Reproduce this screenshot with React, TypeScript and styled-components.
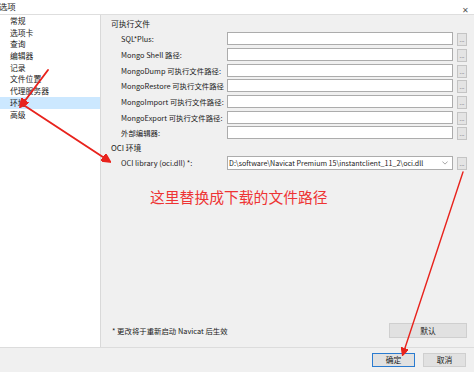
import { FC } from "react";
import styled, { createGlobalStyle } from "styled-components";

const GlobalStyle = createGlobalStyle`
  html, body {
    margin: 0;
    padding: 0;
    background: #f0f0f0;
  }
  * {
    box-sizing: border-box;
  }
`;

const navItems = ["常规", "选项卡", "查询", "编辑器", "记录", "文件位置", "代理服务器", "环境", "高级"];

const pathRows = [
  "SQL*Plus:",
  "Mongo Shell 路径:",
  "MongoDump 可执行文件路径:",
  "MongoRestore 可执行文件路径",
  "MongoImport 可执行文件路径:",
  "MongoExport 可执行文件路径:",
  "外部编辑器:",
];

const App: FC = () => {
  return (
    <>
      <GlobalStyle />
      <Window>
        <TitleBar>
          <Title>选项</Title>
          <Close>✕</Close>
        </TitleBar>

        <Body>
          <Sidebar>
            {navItems.map((item) => (
              <NavItem key={item} $active={item === "环境"}>
                {item}
              </NavItem>
            ))}
          </Sidebar>

          <Content>
            <SectionTitle>可执行文件</SectionTitle>
            <Rows>
              {pathRows.map((label) => (
                <Row key={label}>
                  <Label>{label}</Label>
                  <TextBox />
                  <Browse>...</Browse>
                </Row>
              ))}
            </Rows>

            <SectionTitle $gap>OCI 环境</SectionTitle>
            <Rows>
              <Row>
                <Label>OCI library (oci.dll) *:</Label>
                <Combo>
                  <ComboText>D:\software\Navicat Premium 15\instantclient_11_2\oci.dll</ComboText>
                  <Chevron viewBox="0 0 8 5">
                    <path d="M0.5 0.5 L4 4 L7.5 0.5" />
                  </Chevron>
                </Combo>
                <Browse>...</Browse>
              </Row>
            </Rows>

            <Annotation>这里替换成下载的文件路径</Annotation>

            <NoteRow>
              <Note>* 更改将于重新启动 Navicat 后生效</Note>
              <DefaultButton>默认</DefaultButton>
            </NoteRow>
          </Content>
        </Body>

        <Footer>
          <FooterButton $primary>确定</FooterButton>
          <FooterButton>取消</FooterButton>
        </Footer>

        <Arrows viewBox="0 0 474 372">
          <defs>
            <marker id="head" viewBox="0 0 10 10" refX="8" refY="5" markerWidth="5" markerHeight="4.5" orient="auto">
              <path d="M0 0 L10 5 L0 10 z" fill="#e8231d" />
            </marker>
            <marker id="headThin" viewBox="0 0 10 10" refX="8" refY="5" markerWidth="6" markerHeight="5" orient="auto">
              <path d="M0 0 L10 5 L0 10 z" fill="#e8231d" />
            </marker>
          </defs>
          <line x1="48" y1="70" x2="21" y2="106" markerEnd="url(#head)" />
          <line x1="22" y1="104" x2="109" y2="161" markerEnd="url(#head)" />
          <line x1="463" y1="172" x2="403" y2="354" markerEnd="url(#headThin)" strokeWidth="1.4" />
        </Arrows>
      </Window>
    </>
  );
};

export default App;

const Window = styled.div`
  position: relative;
  width: 474px;
  height: 372px;
  display: flex;
  flex-direction: column;
  background: #f0f0f0;
  font-family: "Noto Sans CJK SC", "Noto Sans", sans-serif;
  font-size: 7.8px;
  color: #1a1a1a;
  overflow: hidden;
`;

const TitleBar = styled.div`
  height: 15px;
  flex: none;
  background: #ffffff;
  display: flex;
  align-items: center;
  justify-content: space-between;
  padding: 0 5px 0 0;
  border-bottom: 1px solid #dedede;
`;

const Title = styled.div`
  font-size: 8.4px;
  margin-left: -1px;
  margin-top: -2px;
`;

const Close = styled.div`
  font-size: 8px;
  color: #555;
  margin-top: 5px;
`;

const Body = styled.div`
  flex: 1;
  display: flex;
  min-height: 0;
`;

const Sidebar = styled.div`
  width: 101px;
  flex: none;
  background: #ffffff;
  border-right: 1px solid #d9d9d9;
`;

const NavItem = styled.div<{ $active?: boolean }>`
  height: 11.7px;
  line-height: 11.7px;
  padding-left: 10px;
  background: ${({ $active }) => ($active ? "#cce8ff" : "transparent")};
`;

const Content = styled.div`
  flex: 1;
  display: flex;
  flex-direction: column;
  padding: 3px 7px 9px 10px;
`;

const SectionTitle = styled.div<{ $gap?: boolean }>`
  line-height: 12px;
  margin-top: ${({ $gap }) => ($gap ? "1.5px" : "0")};
  margin-bottom: 1px;
`;

const Rows = styled.div`
  display: flex;
  flex-direction: column;
  padding-left: 10px;
`;

const Row = styled.div`
  height: 15.65px;
  display: grid;
  grid-template-columns: 106px 226px 14px;
  align-items: center;
`;

const Label = styled.div`
  font-size: 7.4px;
  white-space: nowrap;
`;

const TextBox = styled.div`
  height: 13px;
  background: #ffffff;
  border: 1px solid #acacac;
`;

const Combo = styled.div`
  height: 14px;
  background: #ffffff;
  border: 1px solid #acacac;
  display: flex;
  align-items: center;
  justify-content: space-between;
  padding: 0 4px 0 1px;
`;

const ComboText = styled.span`
  font-size: 7.1px;
  white-space: nowrap;
`;

const Chevron = styled.svg`
  width: 6px;
  height: 4px;
  fill: none;
  stroke: #888;
  stroke-width: 1;
`;

const Browse = styled.div`
  justify-self: end;
  width: 10px;
  height: 13px;
  margin-top: 2px;
  background: #e4e4e4;
  border: 1px solid #c4c4c4;
  color: #666;
  font-size: 6px;
  line-height: 12px;
  text-align: center;
`;

const Annotation = styled.div`
  margin-top: 16px;
  margin-left: 39px;
  font-size: 14.8px;
  line-height: 20px;
  color: #ee3434;
`;

const NoteRow = styled.div`
  margin-top: auto;
  display: flex;
  align-items: center;
  justify-content: space-between;
  padding-left: 1px;
`;

const Note = styled.div`
  font-size: 7.4px;
`;

const DefaultButton = styled.div`
  width: 78px;
  height: 15px;
  background: #e1e1e1;
  border: 1px solid #cfcfcf;
  display: flex;
  align-items: center;
  justify-content: center;
`;

const Footer = styled.div`
  height: 25px;
  flex: none;
  border-top: 1px solid #dcdcdc;
  display: flex;
  align-items: center;
  justify-content: flex-end;
  gap: 8px;
  padding: 0 8px 1px 0;
`;

const FooterButton = styled.div<{ $primary?: boolean }>`
  width: 43px;
  height: 14px;
  background: #e1e1e1;
  border: 1px solid ${({ $primary }) => ($primary ? "#2a7bd0" : "#cfcfcf")};
  display: flex;
  align-items: center;
  justify-content: center;
`;

const Arrows = styled.svg`
  position: absolute;
  inset: 0;
  width: 474px;
  height: 372px;
  pointer-events: none;
  stroke: #e8231d;
  stroke-width: 1.9;
  stroke-linecap: round;
`;
